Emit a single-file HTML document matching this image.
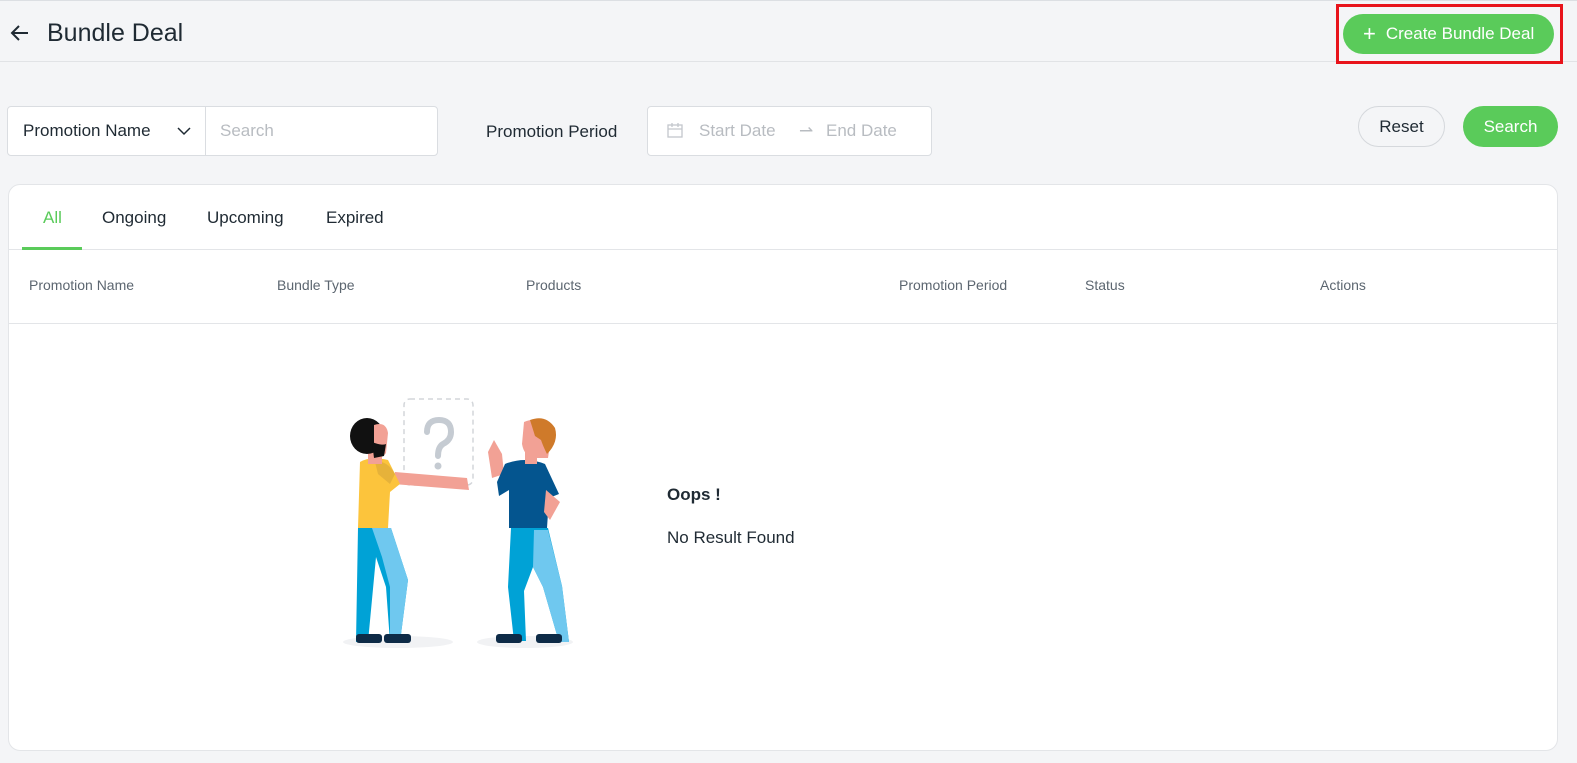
<!DOCTYPE html>
<html><head><meta charset="utf-8"><style>
*{box-sizing:border-box;margin:0;padding:0}
body{width:1577px;height:763px;background:#f4f5f7;font-family:"Liberation Sans",Arial,sans-serif;color:#1f2a33;position:relative;overflow:hidden}
.abs{position:absolute}
.top{left:0;top:0;width:1577px;height:1px;background:#dcdfe3}
.hline{left:0;top:61px;width:1577px;height:1px;background:#e1e3e6}
.title{left:47px;top:19px;font-size:25px;color:#1f2a33}
.create{left:1343px;top:14px;width:211px;height:40px;border-radius:20px;background:#5acb5a;color:#fff;font-size:17px;line-height:40px;padding-left:20px}
.redbox{left:1336px;top:4px;width:227px;height:60px;border:3px solid #e8131b}
.input{background:#fff;border:1px solid #dadde1;border-radius:4px}
.card{left:8px;top:184px;width:1550px;height:567px;background:#fff;border:1px solid #e3e5e8;border-radius:12px}
.th{top:277px;font-size:14px;color:#5c6670}
</style></head><body>
<div class="abs top"></div>
<div class="abs hline"></div>
<svg class="abs" style="left:10px;top:24px" width="20" height="18" viewBox="0 0 20 18"><path d="M18 9H2M9 2L2 9l7 7" fill="none" stroke="#1f2a33" stroke-width="2"/></svg>
<div class="abs title">Bundle Deal</div>
<div class="abs redbox"></div>
<div class="abs create"><span style="font-size:22px;vertical-align:-2px;margin-right:10px">+</span>Create Bundle Deal</div>

<div class="abs input" style="left:7px;top:106px;width:431px;height:50px"></div>
<div class="abs" style="left:205px;top:106px;width:1px;height:50px;background:#dadde1"></div>
<div class="abs" style="left:23px;top:121px;font-size:17px">Promotion Name</div>
<svg class="abs" style="left:177px;top:127px" width="14" height="9" viewBox="0 0 14 9"><path d="M1 1l6 6 6-6" fill="none" stroke="#1f2a33" stroke-width="1.5"/></svg>
<div class="abs" style="left:220px;top:121px;font-size:17px;color:#b8bcc1">Search</div>
<div class="abs" style="left:486px;top:122px;font-size:17px">Promotion Period</div>
<div class="abs input" style="left:647px;top:106px;width:285px;height:50px"></div>
<svg class="abs" style="left:667px;top:122px" width="16" height="16" viewBox="0 0 16 16"><rect x="1" y="3" width="14" height="12" fill="none" stroke="#c3c7cc" stroke-width="1.3"/><path d="M1 7h14M5 1v4M11 1v4" stroke="#c3c7cc" stroke-width="1.3"/></svg>
<div class="abs" style="left:699px;top:121px;font-size:17px;color:#b8bcc1">Start Date</div>
<div class="abs" style="left:799px;top:121px;font-size:17px;color:#b8bcc1">⇀</div>
<div class="abs" style="left:826px;top:121px;font-size:17px;color:#b8bcc1">End Date</div>
<div class="abs" style="left:1358px;top:106px;width:87px;height:41px;border:1px solid #d5d8dc;border-radius:21px;background:#f4f5f7;text-align:center;line-height:39px;font-size:17px">Reset</div>
<div class="abs" style="left:1463px;top:106px;width:95px;height:41px;border-radius:21px;background:#5acb5a;color:#fff;text-align:center;line-height:41px;font-size:17px">Search</div>

<div class="abs card"></div>
<div class="abs" style="left:43px;top:208px;font-size:17px;color:#5acb5a">All</div>
<div class="abs" style="left:102px;top:208px;font-size:17px">Ongoing</div>
<div class="abs" style="left:207px;top:208px;font-size:17px">Upcoming</div>
<div class="abs" style="left:326px;top:208px;font-size:17px">Expired</div>
<div class="abs" style="left:9px;top:249px;width:1548px;height:1px;background:#e3e5e8"></div>
<div class="abs" style="left:22px;top:247px;width:60px;height:3px;background:#5acb5a"></div>
<div class="abs th" style="left:29px">Promotion Name</div>
<div class="abs th" style="left:277px">Bundle Type</div>
<div class="abs th" style="left:526px">Products</div>
<div class="abs th" style="left:899px">Promotion Period</div>
<div class="abs th" style="left:1085px">Status</div>
<div class="abs th" style="left:1320px">Actions</div>
<div class="abs" style="left:9px;top:323px;width:1548px;height:1px;background:#e3e5e8"></div>

<svg class="abs" style="left:320px;top:380px" width="280" height="280" viewBox="0 0 280 280">
<ellipse cx="78" cy="262" rx="55" ry="6" fill="#f1f2f4"/>
<ellipse cx="205" cy="262" rx="48" ry="6" fill="#f1f2f4"/>
<rect x="84" y="19" width="69" height="86" rx="6" fill="none" stroke="#d3d6da" stroke-width="1.5" stroke-dasharray="5 4"/>
<path d="M107 52q0-12 12-12t12 12q0 8-8 12-5 3-5 12" fill="none" stroke="#c5cbd2" stroke-width="6" stroke-linecap="round"/>
<circle cx="118" cy="86" r="3.5" fill="#c5cbd2"/>
<!-- man 1 -->
<path d="M75 92l72 6 2 12-76-6z" fill="#f2a195"/>
<path d="M40 82q10-6 28-2l12 24-10 8-2 36H38z" fill="#fcc43c"/>
<path d="M55 82q12-2 20 12l-5 10-12-10z" fill="#e6b23a"/>
<path d="M38 148h33l17 52-8 62H70l-4-55-10-30-8 85H36z" fill="#00a2d6"/>
<path d="M52 148h19l17 52-8 62H70l0-55-8-30z" fill="#6fc8ef"/>
<rect x="48" y="68" width="14" height="16" fill="#f2a195"/>
<ellipse cx="47" cy="56" rx="17" ry="18" fill="#111"/>
<path d="M54 45q12-4 14 8l-2 20q-4 6-12 4z" fill="#f2a195"/>
<path d="M52 62q10 4 14 2l-2 12-10 2z" fill="#111"/>
<rect x="36" y="254" width="26" height="9" rx="3" fill="#0e2b47"/>
<rect x="64" y="254" width="27" height="9" rx="3" fill="#0e2b47"/>
<!-- man 2 -->
<path d="M174 60l-6 12 4 26 12-4-2-20z" fill="#f2a195"/>
<path d="M185 84q20-8 40 0l14 30-10 4-2 30h-38v-38l-10 6-2-14z" fill="#04558f"/>
<path d="M226 110l14 12-10 18-6-8z" fill="#f2a195"/>
<path d="M191 148h37l14 58 7 56h-10l-16-55-10-20-9 24 2 50h-12l-6-54z" fill="#00a2d6"/>
<path d="M214 150h14l14 56 7 56h-10l-16-55-10-20z" fill="#6fc8ef"/>
<rect x="205" y="66" width="12" height="18" fill="#f2a195"/>
<path d="M204 42q20-8 28 10l-4 26h-14q-10-2-12-14z" fill="#f2a195"/>
<path d="M210 40q16-6 25 8 4 14-8 26-4-8-6-14l-6-4z" fill="#cf7a2a"/>
<rect x="176" y="254" width="26" height="9" rx="3" fill="#0e2b47"/>
<rect x="216" y="254" width="26" height="9" rx="3" fill="#0e2b47"/>
</svg>
<div class="abs" style="left:667px;top:485px;font-size:17px;font-weight:bold">Oops !</div>
<div class="abs" style="left:667px;top:528px;font-size:17px">No Result Found</div>
</body></html>
